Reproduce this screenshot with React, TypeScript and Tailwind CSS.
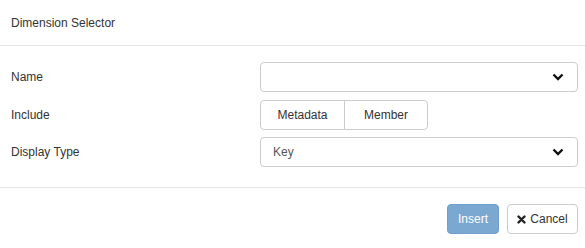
import { useState } from 'react';

function Chevron() {
  return (
    <svg width="12" height="8" viewBox="0 0 12 8" className="shrink-0">
      <polyline points="1.5,1.5 6,6 10.5,1.5" fill="none" stroke="#111" strokeWidth="2.4" />
    </svg>
  );
}

function SelectBox({ value }: { value?: string }) {
  return (
    <div className="flex h-[30px] w-[318px] items-center justify-between rounded-[4px] border border-[#ccc] bg-white pl-[12px] pr-[13px] text-[12px] text-[#555]">
      <span>{value}</span>
      <Chevron />
    </div>
  );
}

export default function App() {
  const [include, setInclude] = useState<'metadata' | 'member' | null>(null);

  const rowLabel = 'w-[249px] text-[12px] text-[#333]';

  return (
    <div className="flex h-[248px] w-[585px] flex-col bg-white font-['Liberation_Sans',Arial,sans-serif] text-[#333]">
      <div className="flex h-[46px] items-center border-b border-[#e5e5e5] pl-[11px] text-[12px]">
        Dimension Selector
      </div>

      <div className="flex flex-col gap-[7.5px] border-b border-[#e5e5e5] pb-[20px] pl-[11px] pt-[16px]">
        <div className="flex items-center">
          <div className={rowLabel}>Name</div>
          <SelectBox />
        </div>
        <div className="flex items-center">
          <div className={rowLabel}>Include</div>
          <div className="flex h-[30px]">
            <button
              onClick={() => setInclude('metadata')}
              className="h-full w-[85px] rounded-l-[4px] border border-[#ccc] bg-white text-[12px] text-[#333]"
            >
              Metadata
            </button>
            <button
              onClick={() => setInclude('member')}
              className="-ml-px h-full w-[84px] rounded-r-[4px] border border-[#ccc] bg-white text-[12px] text-[#333]"
            >
              Member
            </button>
          </div>
        </div>
        <div className="flex items-center">
          <div className={rowLabel}>Display Type</div>
          <SelectBox value="Key" />
        </div>
      </div>

      <div className="flex justify-end gap-[8px] pr-[7px] pt-[16px]">
        <button
          disabled
          className="h-[30px] w-[52px] rounded-[4px] border border-[#6f9fcc] bg-[#7aa8d0] text-[12px] text-white"
        >
          Insert
        </button>
        <button className="flex h-[30px] w-[71px] items-center justify-center gap-[4px] rounded-[4px] border border-[#ccc] bg-white text-[12px] text-[#333]">
          <svg width="9" height="9" viewBox="0 0 9 9">
            <path d="M1.5 1.5 L7.5 7.5 M7.5 1.5 L1.5 7.5" stroke="#222" strokeWidth="2.4" strokeLinecap="round" />
          </svg>
          Cancel
        </button>
      </div>
      {include && null}
    </div>
  );
}
